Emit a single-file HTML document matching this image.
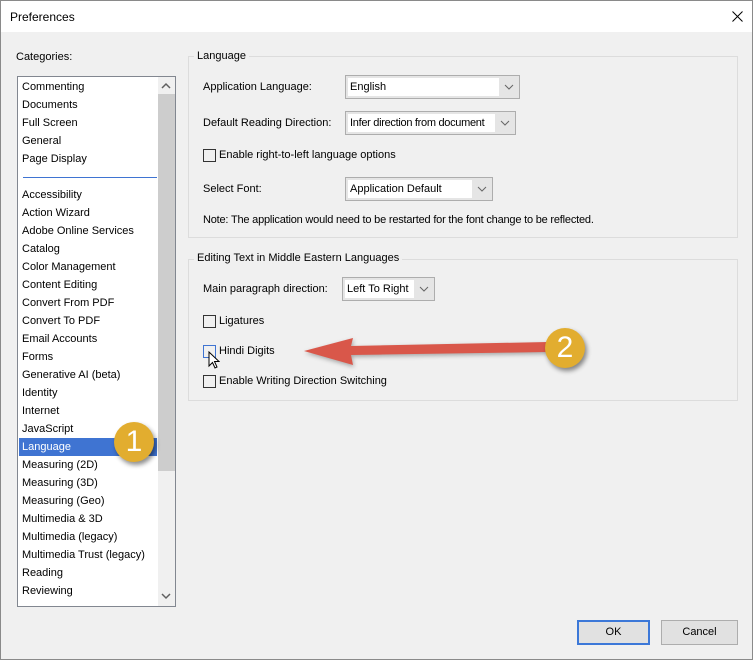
<!DOCTYPE html>
<html><head><style>
*{margin:0;padding:0;box-sizing:border-box;white-space:nowrap}
body{width:753px;height:663px;background:#fff;font-family:"Liberation Sans",sans-serif;font-size:11px;color:#000;position:relative;overflow:hidden}
.a{position:absolute}
.win{position:absolute;left:0;top:0;width:753px;height:660px;background:#f0f0f0;border:1px solid #8a8a8a}
.title{position:absolute;left:0;top:0;width:751px;height:31px;background:#fff}
.grp{position:absolute;border:1px solid #dcdcdc}
.leg{position:absolute;background:#f0f0f0;padding:0 3px}
.dd{position:absolute;height:24px;border:1px solid #adadad;background:#e5e5e5}
.dd .in{position:absolute;left:2px;top:2px;bottom:2px;background:#fff;padding-left:2px;line-height:18px;overflow:hidden}
.dd svg{position:absolute;top:8px}
.cb{position:absolute;width:13px;height:13px;border:1px solid #333;background:#f0f0f0}
.item{position:absolute;left:21px;height:18px;line-height:18px}
.btn{position:absolute;top:619px;height:25px;background:#e1e1e1;border:1px solid #adadad;text-align:center;line-height:23px}
.badge{position:absolute;width:40px;height:40px;border-radius:50%;background:#e2ad2f;color:#fff;font-size:30px;text-align:center;line-height:40px;box-shadow:2px 3px 5px rgba(0,0,0,.45)}
</style></head><body>
<div class="win">
<div class="title"></div>
<div class="a" style="left:9px;top:9px;font-size:12px">Preferences</div>
<svg class="a" style="left:731px;top:10px" width="11" height="11"><path d="M0.5 0.5 L10.5 10.5 M10.5 0.5 L0.5 10.5" stroke="#000" stroke-width="1"/></svg>
<div class="a" style="left:15px;top:50px">Categories:</div>
<div class="a" style="left:16px;top:75px;width:159px;height:531px;background:#fff;border:1px solid #828790;overflow:hidden">
 <div class="a" style="left:140px;top:0;width:17px;height:529px;background:#f0f0f0"></div>
 <div class="a" style="left:140px;top:17px;width:17px;height:377px;background:#cdcdcd"></div>
 <svg class="a" style="left:143px;top:5px" width="10" height="8"><path d="M1 6 L5 2 L9 6" stroke="#606060" stroke-width="1.5" fill="none"/></svg>
 <svg class="a" style="left:143px;top:515px" width="10" height="8"><path d="M1 2 L5 6 L9 2" stroke="#606060" stroke-width="1.5" fill="none"/></svg>
 <div class="a" style="left:5px;top:100px;width:134px;height:1px;background:#3f74d2"></div>
 <div class="a" style="left:1px;top:361px;width:138px;height:18px;background:#3f74d2"></div>
</div>
<div style="position:absolute;left:0;top:0">
<div class="item" style="top:77px">Commenting</div>
<div class="item" style="top:95px">Documents</div>
<div class="item" style="top:113px">Full Screen</div>
<div class="item" style="top:131px">General</div>
<div class="item" style="top:149px">Page Display</div>
<div class="item" style="top:185px">Accessibility</div>
<div class="item" style="top:203px">Action Wizard</div>
<div class="item" style="top:221px">Adobe Online Services</div>
<div class="item" style="top:239px">Catalog</div>
<div class="item" style="top:257px">Color Management</div>
<div class="item" style="top:275px">Content Editing</div>
<div class="item" style="top:293px">Convert From PDF</div>
<div class="item" style="top:311px">Convert To PDF</div>
<div class="item" style="top:329px">Email Accounts</div>
<div class="item" style="top:347px">Forms</div>
<div class="item" style="top:365px">Generative AI (beta)</div>
<div class="item" style="top:383px">Identity</div>
<div class="item" style="top:401px">Internet</div>
<div class="item" style="top:419px">JavaScript</div>
<div class="item" style="top:437px;color:#fff">Language</div>
<div class="item" style="top:455px">Measuring (2D)</div>
<div class="item" style="top:473px">Measuring (3D)</div>
<div class="item" style="top:491px">Measuring (Geo)</div>
<div class="item" style="top:509px">Multimedia &amp; 3D</div>
<div class="item" style="top:527px">Multimedia (legacy)</div>
<div class="item" style="top:545px">Multimedia Trust (legacy)</div>
<div class="item" style="top:563px">Reading</div>
<div class="item" style="top:581px">Reviewing</div>
</div>

<div class="grp" style="left:187px;top:55px;width:550px;height:182px"></div>
<div class="leg a" style="left:193px;top:49px">Language</div>
<div class="a" style="left:202px;top:80px">Application Language:</div>
<div class="dd" style="left:344px;top:74px;width:175px"><div class="in" style="right:20px">English</div><svg style="left:158px" width="10" height="6"><path d="M1 1 L5 5 L9 1" stroke="#666" fill="none"/></svg></div>
<div class="a" style="left:202px;top:116px">Default Reading Direction:</div>
<div class="dd" style="left:344px;top:110px;width:171px"><div class="in" style="right:20px;letter-spacing:-0.3px">Infer direction from document</div><svg style="left:154px" width="10" height="6"><path d="M1 1 L5 5 L9 1" stroke="#666" fill="none"/></svg></div>
<div class="cb" style="left:202px;top:148px"></div>
<div class="a" style="left:218px;top:148px">Enable right-to-left language options</div>
<div class="a" style="left:202px;top:182px">Select Font:</div>
<div class="dd" style="left:344px;top:176px;width:148px"><div class="in" style="right:20px">Application Default</div><svg style="left:131px" width="10" height="6"><path d="M1 1 L5 5 L9 1" stroke="#666" fill="none"/></svg></div>
<div class="a" style="left:202px;top:213px;letter-spacing:-0.2px">Note: The application would need to be restarted for the font change to be reflected.</div>

<div class="grp" style="left:187px;top:258px;width:550px;height:142px"></div>
<div class="leg a" style="left:193px;top:251px">Editing Text in Middle Eastern Languages</div>
<div class="a" style="left:202px;top:282px">Main paragraph direction:</div>
<div class="dd" style="left:341px;top:276px;width:93px"><div class="in" style="right:20px">Left To Right</div><svg style="left:76px" width="10" height="6"><path d="M1 1 L5 5 L9 1" stroke="#666" fill="none"/></svg></div>
<div class="cb" style="left:202px;top:314px"></div>
<div class="a" style="left:218px;top:314px">Ligatures</div>
<div class="cb" style="left:202px;top:344px;border-color:#3f74d2"></div>
<div class="a" style="left:218px;top:344px">Hindi Digits</div>
<div class="cb" style="left:202px;top:374px"></div>
<div class="a" style="left:218px;top:374px">Enable Writing Direction Switching</div>
<svg class="a" style="left:207px;top:350px" width="12" height="20"><path d="M1 1 L1 15 L4.5 11.5 L7 17 L9 16 L6.5 10.5 L11 10.5 Z" fill="#fff" stroke="#000" stroke-width="1"/></svg>

<svg class="a" style="left:295px;top:330px" width="260" height="40"><path d="M8 20 L57 7 L55 15 L252 11 L252 21 L55 24 L57 34 Z" fill="#d9574a" filter="drop-shadow(1px 2px 2px rgba(0,0,0,.3))"/></svg>
<div class="badge" style="left:544px;top:327px">2</div>
<div class="badge" style="left:113px;top:421px">1</div>

<div class="btn" style="left:576px;width:73px;border:2px solid #3c78d8;line-height:21px">OK</div>
<div class="btn" style="left:660px;width:77px">Cancel</div>
</div>
</body></html>
